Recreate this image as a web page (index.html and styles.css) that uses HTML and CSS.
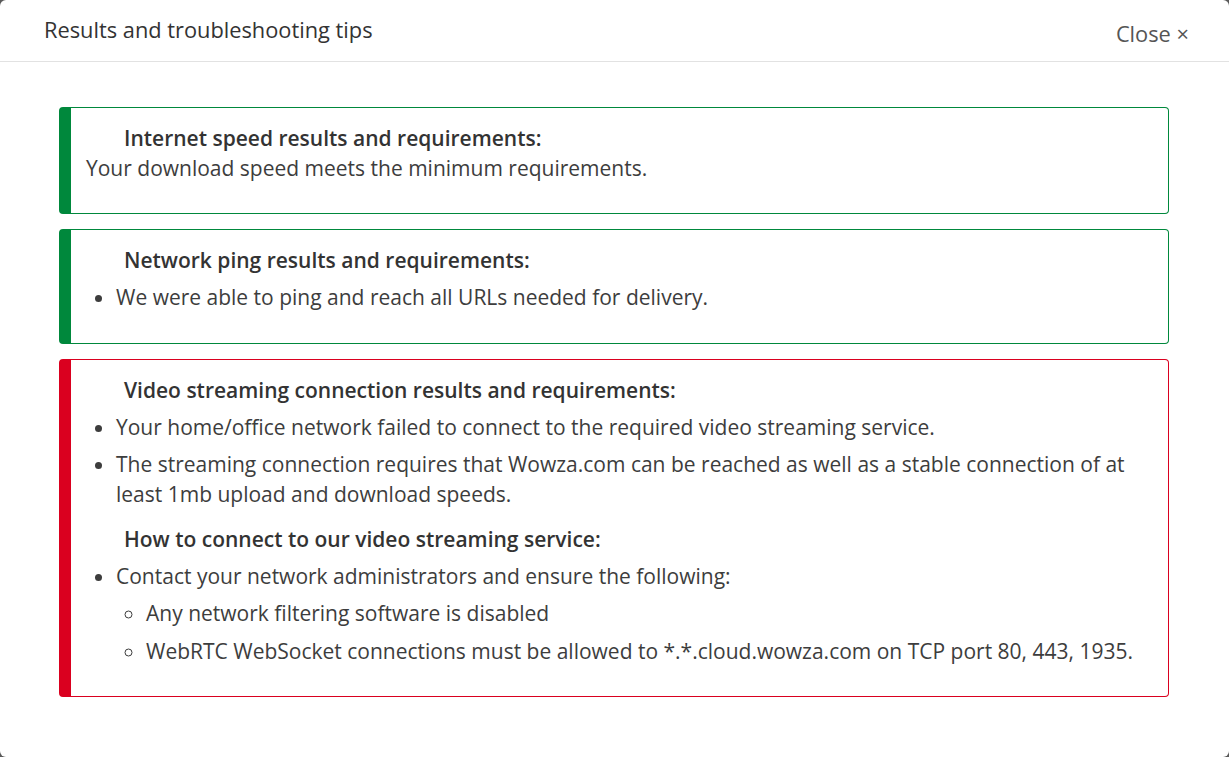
FILE: index.html
```html
<!DOCTYPE html>
<html lang="en">
<head>
<meta charset="utf-8">
<title>Results and troubleshooting tips</title>
<link rel="stylesheet" href="styles.css">
</head>
<body>
<div class="modal">
  <header class="modal-header">
    <h1 class="modal-title">Results and troubleshooting tips</h1>
    <button class="close-btn">Close <span class="close-x">×</span></button>
  </header>
  <main class="modal-body">
    <section class="result result-ok">
      <h2 class="result-title">Internet speed results and requirements:</h2>
      <p class="result-text">Your download speed meets the minimum requirements.</p>
    </section>
    <section class="result result-ok">
      <h2 class="result-title">Network ping results and requirements:</h2>
      <ul class="result-list">
        <li>We were able to ping and reach all URLs needed for delivery.</li>
      </ul>
    </section>
    <section class="result result-fail">
      <h2 class="result-title">Video streaming connection results and requirements:</h2>
      <ul class="result-list">
        <li>Your home/office network failed to connect to the required video streaming service.</li>
        <li>The streaming connection requires that Wowza.com can be reached as well as a stable connection of at least 1mb upload and download speeds.</li>
      </ul>
      <h2 class="result-title sub">How to connect to our video streaming service:</h2>
      <ul class="result-list">
        <li>Contact your network administrators and ensure the following:
          <ul class="sub-list">
            <li>Any network filtering software is disabled</li>
            <li>WebRTC WebSocket connections must be allowed to *.*.cloud.wowza.com on TCP port 80, 443, 1935.</li>
          </ul>
        </li>
      </ul>
    </section>
  </main>
</div>
</body>
</html>
```

FILE: styles.css
```css
html, body {
  margin: 0;
  padding: 0;
  background: #5a5a5a;
}
body {
  font-family: "Open Sans", "Liberation Sans", sans-serif;
  color: #3d3d3d;
}
.modal {
  background: #fff;
  height: 757px;
  border-radius: 6px;
  box-sizing: border-box;
  overflow: hidden;
}
.modal-header {
  display: flex;
  justify-content: space-between;
  align-items: flex-start;
  height: 62px;
  box-sizing: border-box;
  border-bottom: 1px solid #e2e2e2;
  padding: 0 40px 0 44px;
}
.modal-title {
  margin: 15px 0 0;
  font-size: 21.8px;
  font-weight: 400;
  color: #333;
  line-height: 30px;
}
.close-btn {
  margin-top: 19px;
  border: 0;
  background: none;
  padding: 0;
  font-family: inherit;
  font-size: 21.8px;
  line-height: 30px;
  color: #555;
  cursor: pointer;
}
.modal-body {
  padding: 45px 60px 0 59px;
  display: flex;
  flex-direction: column;
  gap: 15px;
}
.result {
  border: 1px solid;
  border-left-width: 12px;
  border-radius: 4px;
  padding: 15px 26px 30px 15px;
}
.result-ok { border-color: #00883c; }
.result-fail { border-color: #da001f; }
.result-title {
  margin: 0;
  padding-left: 38px;
  font-size: 21px;
  font-weight: 600;
  line-height: 30px;
  color: #333;
}
.result-title.sub {
  margin-top: 14.5px;
}
.result-text {
  margin: 0;
  font-size: 21px;
  line-height: 30px;
}
.result-list {
  margin: 0;
  padding-left: 30px;
  font-size: 21px;
  line-height: 29.5px;
}
.result-list > li {
  margin: 8px 0 0;
}
.sub-list {
  margin: 0;
  padding-left: 30px;
  list-style-type: circle;
}
.sub-list > li {
  margin-top: 8px;
}
```
